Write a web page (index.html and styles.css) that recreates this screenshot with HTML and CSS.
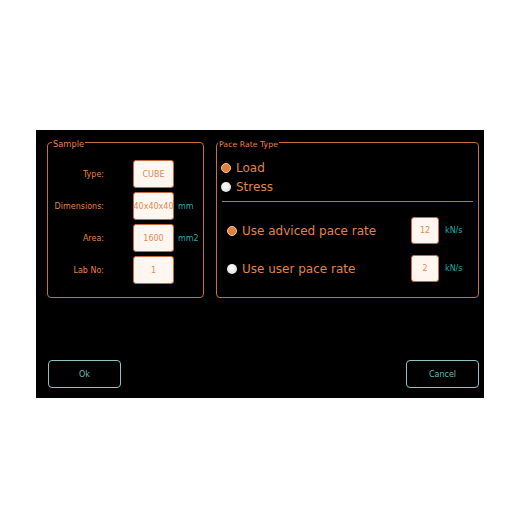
FILE: index.html
```html
<!DOCTYPE html>
<html>
<head>
<meta charset="utf-8">
<link rel="stylesheet" href="styles.css">
</head>
<body>
<div class="screen">
  <div class="groups">
    <div class="group sample">
      <span class="title">Sample</span>
      <div class="form">
        <span class="label">Type:</span><span class="box">CUBE</span><span class="unit"></span>
        <span class="label">Dimensions:</span><span class="box">40x40x40</span><span class="unit">mm</span>
        <span class="label">Area:</span><span class="box">1600</span><span class="unit">mm2</span>
        <span class="label">Lab No:</span><span class="box">1</span><span class="unit"></span>
      </div>
    </div>
    <div class="group pace">
      <span class="title small">Pace Rate Type</span>
      <div class="types">
        <div class="opt"><span class="radio on"></span><span>Load</span></div>
        <div class="opt"><span class="radio"></span><span>Stress</span></div>
      </div>
      <div class="divider"></div>
      <div class="rates">
        <div class="opt"><span class="radio on"></span><span>Use adviced pace rate</span></div>
        <span class="box rbox">12</span><span class="unit">kN/s</span>
        <div class="opt"><span class="radio"></span><span>Use user pace rate</span></div>
        <span class="box rbox">2</span><span class="unit">kN/s</span>
      </div>
    </div>
  </div>
  <div class="buttons">
    <button class="btn">Ok</button>
    <button class="btn">Cancel</button>
  </div>
</div>
</body>
</html>
```

FILE: styles.css
```css
html, body {
  margin: 0;
  padding: 0;
  background: #ffffff;
}
body {
  font-family: "DejaVu Sans", sans-serif;
}
.screen {
  margin: 130px 0 0 36px;
  width: 448px;
  height: 268px;
  box-sizing: border-box;
  background: #000000;
  padding: 12px 5px 10px 11px;
  display: flex;
  flex-direction: column;
  justify-content: space-between;
}
.groups {
  display: flex;
  gap: 12px;
  height: 156px;
}
.group {
  position: relative;
  border: 1px solid #c8703c;
  border-radius: 4px;
  box-sizing: border-box;
  height: 156px;
}
.sample {
  width: 157px;
  padding-top: 17px;
}
.pace {
  width: 263px;
  padding-top: 15px;
}
.title {
  position: absolute;
  top: -3px;
  left: 4px;
  background: #000;
  padding: 0 1px;
  color: #e0844c;
  font-size: 8.3px;
  line-height: 9px;
}
.title.small {
  font-size: 7.8px;
  left: 1px;
}
.form {
  display: grid;
  grid-template-columns: 56px 41px auto;
  grid-auto-rows: 28px;
  column-gap: 29px;
  row-gap: 4px;
  align-items: center;
}
.label {
  text-align: right;
  color: #e0844c;
  font-size: 8px;
}
.form .unit {
  margin-left: -25px;
}
.box {
  box-sizing: border-box;
  height: 28px;
  background: #fff7ef;
  border: 1px solid #c8683a;
  border-radius: 3px;
  color: #e08a58;
  font-size: 8px;
  display: flex;
  align-items: center;
  justify-content: center;
  white-space: nowrap;
  overflow: visible;
}
.unit {
  color: #2aa6ae;
  font-size: 8px;
}
.types {
  padding-left: 4px;
}
.opt {
  display: flex;
  align-items: center;
  gap: 5px;
  color: #e0844c;
  font-size: 12px;
  height: 19px;
}
.radio {
  width: 10px;
  height: 10px;
  box-sizing: border-box;
  border-radius: 50%;
  background: radial-gradient(circle at 45% 40%, #ffffff, #d8d8d8);
  flex: none;
}
.radio.on {
  background: #e0803c;
  border: 1.5px solid #f4c8a4;
}
.divider {
  height: 1px;
  background: #c8703c;
  margin: 5px 5px 0 5px;
}
.rates {
  display: grid;
  grid-template-columns: 1fr 28px 33px;
  grid-auto-rows: 27px;
  column-gap: 6px;
  row-gap: 11px;
  align-items: center;
  padding-left: 10px;
  margin-top: 15px;
}
.rbox {
  height: 27px;
}
.buttons {
  display: flex;
  justify-content: space-between;
  padding-left: 1px;
}
.btn {
  width: 73px;
  height: 28px;
  box-sizing: border-box;
  background: #000;
  border: 1px solid #8ec4c4;
  border-radius: 4px;
  color: #6cbcb4;
  font-family: "DejaVu Sans", sans-serif;
  font-size: 8px;
  padding: 0;
}
```
